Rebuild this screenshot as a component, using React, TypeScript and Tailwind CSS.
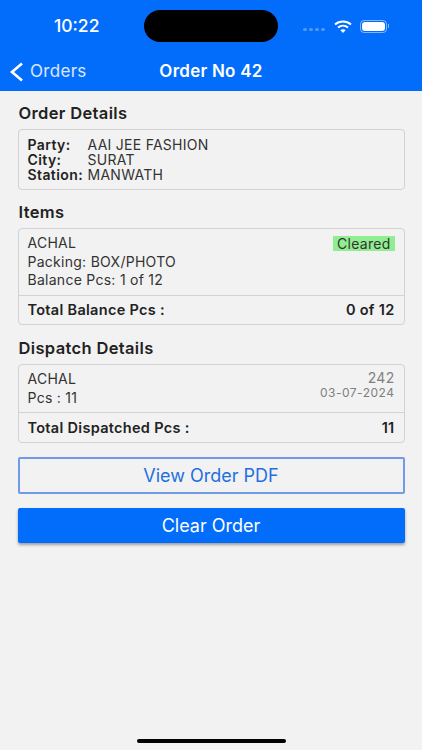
const font = "[font-family:Inter,'Liberation_Sans',sans-serif]"

const SectionTitle = ({ title, className }: { title: string; className: string }) => (
	<div className={`pl-[1px] text-[16.5px] tracking-[0.35px] leading-[18px] font-semibold text-[#222] ${className}`}>{title}</div>
)

const WifiIcon = () => (
	<svg width="18" height="13" viewBox="0 0 18 13" fill="none" stroke="white" strokeWidth="2">
		<path d="M1 4.6C5.6 .6 12.4 .6 17 4.6" />
		<path d="M4 7.6C6.9 5.2 11.1 5.2 14 7.6" />
		<path d="M9 13L6.4 10.2C7.9 9 10.1 9 11.6 10.2Z" fill="white" stroke="none" />
	</svg>
)

const BatteryIcon = () => (
	<div className="flex items-center gap-[1px]">
		<div className="w-[27px] h-[13px] rounded-[4px] border border-white/50 p-[1px] flex">
			<div className="flex-1 rounded-[3px] bg-white" />
		</div>
		<div className="w-[1px] h-[4px] bg-white/50" />
	</div>
)

const SignalDots = () => (
	<div className="flex gap-[2px] mt-[6px]">
		<div className="w-[4px] h-[3px] rounded-full bg-white/30" />
		<div className="w-[4px] h-[3px] rounded-full bg-white/30" />
		<div className="w-[4px] h-[3px] rounded-full bg-white/30" />
		<div className="w-[4px] h-[3px] rounded-full bg-white/30" />
	</div>
)

const Header = () => (
	<div className="h-[91px] bg-[#036dfb] text-white relative shrink-0">
		<div className="flex items-center h-[52px]">
			<div className="w-[144px] pl-[54px] text-[17.5px] font-medium leading-[52px]">10:22</div>
			<div className="w-[134px] h-[32px] rounded-full bg-black" />
			<div className="flex items-center pl-[25px]">
				<SignalDots />
				<div className="ml-[9px] mr-[8px]">
					<WifiIcon />
				</div>
				<BatteryIcon />
			</div>
		</div>
		<div className="flex items-center h-[39px] relative">
			<svg className="ml-[9px]" width="15" height="20" viewBox="0 0 15 20" fill="none" stroke="white" strokeWidth="2.6">
				<path d="M13 1.5L3 10L13 18.5" />
			</svg>
			<span className="ml-[6px] text-[17px] tracking-[0.3px] text-white/85">Orders</span>
			<span className="absolute left-0 right-0 text-center text-[17px] tracking-[0.25px] font-semibold">Order No 42</span>
		</div>
	</div>
)

export default function App() {
	return (
		<div className={`w-[422px] h-[750px] bg-[#f2f2f2] flex flex-col overflow-hidden relative ${font}`}>
			<Header />
			<div className="px-[17.5px] flex flex-col">
				<SectionTitle title="Order Details" className="mt-[13px] mb-[7px]" />
				<div className="h-[61px] border-[1.5px] border-[#d2d2d2] rounded-[4px] px-[9px] py-[6.5px] text-[14px] tracking-[0.27px] leading-[15px] text-[#333] grid grid-cols-[60px_1fr]">
					<span className="font-semibold text-[#222] tracking-[0.4px]">Party:</span>
					<span>AAI JEE FASHION</span>
					<span className="font-semibold text-[#222] tracking-[0.4px]">City:</span>
					<span>SURAT</span>
					<span className="font-semibold text-[#222] tracking-[0.4px]">Station:</span>
					<span>MANWATH</span>
				</div>

				<SectionTitle title="Items" className="mt-[13px] mb-[7px]" />
				<div className="h-[97px] border-[1.5px] border-[#d2d2d2] rounded-[4px] text-[14px] tracking-[0.27px] text-[#333] flex flex-col">
					<div className="h-[66px] px-[9px] pt-[5px] relative leading-[18.5px]">
						<div>ACHAL</div>
						<div>Packing: BOX/PHOTO</div>
						<div>Balance Pcs: 1 of 12</div>
						<div className="absolute right-[8.5px] top-[6.5px] bg-[#90ee90] px-[4.5px] h-[15px] leading-[15px]">Cleared</div>
					</div>
					<div className="flex-1 border-t-[1.5px] border-[#d2d2d2] px-[9px] flex items-center justify-between font-semibold text-[14.5px] tracking-[0.3px] text-[#222]">
						<span>Total Balance Pcs :</span>
						<span>0 of 12</span>
					</div>
				</div>

				<SectionTitle title="Dispatch Details" className="mt-[14px] mb-[7px]" />
				<div className="h-[79px] border-[1.5px] border-[#d2d2d2] rounded-[4px] text-[14px] tracking-[0.27px] text-[#333] flex flex-col">
					<div className="h-[47px] px-[9px] pt-[5px] flex justify-between">
						<div className="leading-[18.5px]">
							<div>ACHAL</div>
							<div>Pcs : 11</div>
						</div>
						<div className="text-right text-[#808080] leading-[14px]">
							<div className="leading-[16px]">242</div>
							<div className="text-[12px] tracking-[0.5px]">03-07-2024</div>
						</div>
					</div>
					<div className="flex-1 border-t-[1.5px] border-[#d2d2d2] px-[9px] flex items-center justify-between font-semibold text-[14.5px] tracking-[0.3px] text-[#222]">
						<span>Total Dispatched Pcs :</span>
						<span>11</span>
					</div>
				</div>

				<button className="mt-[14px] h-[37px] border-2 border-[#6f9be8] rounded-[2px] text-[#1f6fe0] text-[18px]">View Order PDF</button>
				<button className="mt-[14px] h-[35px] bg-[#036dfb] rounded-[2px] text-white text-[18px] shadow-[0_2px_3px_rgba(0,0,0,0.35)]">Clear Order</button>
			</div>
			<div className="absolute bottom-[7px] left-[137px] w-[149px] h-[4px] rounded-full bg-black" />
		</div>
	)
}
